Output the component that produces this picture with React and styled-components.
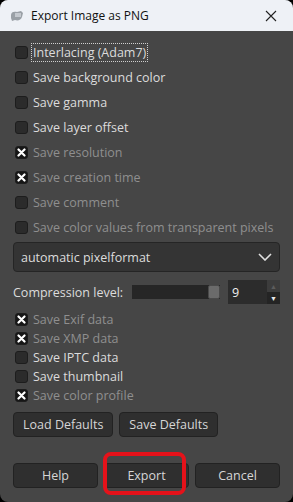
import styled, { createGlobalStyle } from "styled-components";

const GlobalStyle = createGlobalStyle`
  html, body {
    margin: 0;
    padding: 0;
    background: #000;
  }
  body {
    font-family: "Open Sans", "Noto Sans", sans-serif;
  }
`;

const Window = styled.div`
  width: 293px;
  height: 502px;
  display: flex;
  flex-direction: column;
  border-radius: 8px;
  overflow: hidden;
  background: #464646;
`;

const TitleBar = styled.div`
  height: 31px;
  flex: none;
  display: flex;
  align-items: center;
  padding: 0 9px;
  background: #eef1f6;
  color: #111;
  font-size: 12px;
`;

const TitleText = styled.span`
  flex: 1;
  margin-left: 6px;
`;

const CloseButton = styled.span`
  width: 24px;
  display: flex;
  justify-content: center;
  margin-right: 1px;
`;

const Body = styled.div`
  flex: 1;
  display: flex;
  flex-direction: column;
  padding: 9px 13px 14px;
  font-size: 12.5px;
  white-space: nowrap;
`;

const Group = styled.div`
  display: flex;
  flex-direction: column;
  margin-top: ${(p) => p.$top || 0}px;
`;

const Row = styled.label`
  height: ${(p) => p.$h}px;
  display: flex;
  align-items: center;
  gap: 3px;
  padding-left: 2px;
  color: ${(p) => (p.$disabled ? "#8f8f8f" : "#dcdcdc")};
`;

const Box = styled.span`
  width: 13px;
  height: 13px;
  flex: none;
  box-sizing: border-box;
  border-radius: 3px;
  background: ${(p) => (p.$checked ? "#161616" : "#2b2b2b")};
  border: 1px solid #1d1d1d;
  display: flex;
  align-items: center;
  justify-content: center;
`;

const Label = styled.span`
  padding: 0 1px;
  border: 1px dotted ${(p) => (p.$focus ? "#cfcfcf" : "transparent")};
  line-height: 17px;
`;

const Select = styled.div`
  margin-top: 2px;
  height: 30px;
  box-sizing: border-box;
  display: flex;
  align-items: center;
  justify-content: space-between;
  padding: 0 7px 0 7px;
  background: #343434;
  border: 1px solid #252525;
  border-radius: 4px;
  color: #dcdcdc;
`;

const CompressionRow = styled.div`
  margin-top: 8px;
  height: 24px;
  display: flex;
  align-items: center;
  color: #dcdcdc;
`;

const SliderTrack = styled.div`
  margin-left: 9px;
  width: 88px;
  height: 14px;
  background: #262626;
  display: flex;
  justify-content: flex-end;
`;

const SliderHandle = styled.div`
  width: 12px;
  height: 14px;
  box-sizing: border-box;
  background: #6b6b6b;
  border: 1px solid #4a4a4a;
  border-radius: 2px;
`;

const Spin = styled.div`
  margin-left: auto;
  width: 52px;
  height: 24px;
  display: flex;
  background: #2c2c2c;
`;

const SpinValue = styled.span`
  flex: 1;
  padding-left: 4px;
  display: flex;
  align-items: center;
  color: #f0f0f0;
`;

const SpinArrows = styled.div`
  width: 13px;
  display: flex;
  flex-direction: column;
`;

const SpinArrow = styled.span`
  flex: 1;
  display: flex;
  align-items: center;
  justify-content: center;
  background: ${(p) => (p.$dim ? "#3c3c3c" : "#242424")};
  color: ${(p) => (p.$dim ? "#5c5c5c" : "#e8e8e8")};
  font-size: 7px;
`;

const ButtonRow = styled.div`
  margin-top: ${(p) => p.$top}px;
  display: ${(p) => (p.$grid ? "grid" : "flex")};
  grid-template-columns: repeat(3, 1fr);
  gap: 6px;
`;

const Button = styled.div`
  position: relative;
  height: 25px;
  box-sizing: border-box;
  padding: 0 9px;
  display: flex;
  align-items: center;
  justify-content: center;
  background: #2f2f2f;
  border: 1px solid #222;
  border-radius: 4px;
  color: #d6d6d6;
`;

const Highlight = styled.span`
  position: absolute;
  left: -2px;
  right: 2px;
  top: -12px;
  bottom: -8px;
  border: 4px solid #e5121a;
  border-radius: 8px;
`;

const Spacer = styled.div`
  flex: 1;
`;

function Check({ checked }) {
  return (
    <Box $checked={checked}>
      {checked && (
        <svg width="9" height="9" viewBox="0 0 9 9">
          <path d="M1.5 1.5 L7.5 7.5 M7.5 1.5 L1.5 7.5" stroke="#fff" strokeWidth="2.2" strokeLinecap="round" />
        </svg>
      )}
    </Box>
  );
}

const topOptions = [
  { text: "Interlacing (Adam7)", focus: true },
  { text: "Save background color" },
  { text: "Save gamma" },
  { text: "Save layer offset" },
  { text: "Save resolution", checked: true, disabled: true },
  { text: "Save creation time", checked: true, disabled: true },
  { text: "Save comment", disabled: true },
  { text: "Save color values from transparent pixels", disabled: true },
];

const metaOptions = [
  { text: "Save Exif data", checked: true, disabled: true },
  { text: "Save XMP data", checked: true, disabled: true },
  { text: "Save IPTC data" },
  { text: "Save thumbnail" },
  { text: "Save color profile", checked: true, disabled: true },
];

export default function App() {
  return (
    <>
      <GlobalStyle />
      <Window>
        <TitleBar>
          <svg width="16" height="14" viewBox="0 0 16 14">
            <path d="M2 6 C2 3 5 2 8 3 L12 2 L14 4 L13 8 C12 11 9 12 6 11 L3 12 L2 9 Z" fill="#9aa0a6" />
            <path d="M6 5 L12 5 M6 7 L12 7" stroke="#eef1f6" strokeWidth="1" />
          </svg>
          <TitleText>Export Image as PNG</TitleText>
          <CloseButton>
            <svg width="12" height="12" viewBox="0 0 12 12">
              <path d="M1 1 L11 11 M11 1 L1 11" stroke="#222" strokeWidth="1.1" />
            </svg>
          </CloseButton>
        </TitleBar>
        <Body>
          <Group>
            {topOptions.map((o) => (
              <Row key={o.text} $h={25} $disabled={o.disabled}>
                <Check checked={o.checked} />
                <Label $focus={o.focus}>{o.text}</Label>
              </Row>
            ))}
          </Group>
          <Select>
            <span>automatic pixelformat</span>
            <svg width="14" height="8" viewBox="0 0 14 8">
              <path d="M1 1 L7 7 L13 1" stroke="#e0e0e0" strokeWidth="1.6" fill="none" />
            </svg>
          </Select>
          <CompressionRow>
            <span>Compression level:</span>
            <SliderTrack>
              <SliderHandle />
            </SliderTrack>
            <Spin>
              <SpinValue>9</SpinValue>
              <SpinArrows>
                <SpinArrow $dim>▲</SpinArrow>
                <SpinArrow>▼</SpinArrow>
              </SpinArrows>
            </Spin>
          </CompressionRow>
          <Group $top={6}>
            {metaOptions.map((o) => (
              <Row key={o.text} $h={19} $disabled={o.disabled}>
                <Check checked={o.checked} />
                <Label>{o.text}</Label>
              </Row>
            ))}
          </Group>
          <ButtonRow $top={7}>
            <Button>Load Defaults</Button>
            <Button>Save Defaults</Button>
          </ButtonRow>
          <Spacer />
          <ButtonRow $grid $top={0}>
            <Button>Help</Button>
            <Button>
              Export
              <Highlight />
            </Button>
            <Button>Cancel</Button>
          </ButtonRow>
        </Body>
      </Window>
    </>
  );
}
